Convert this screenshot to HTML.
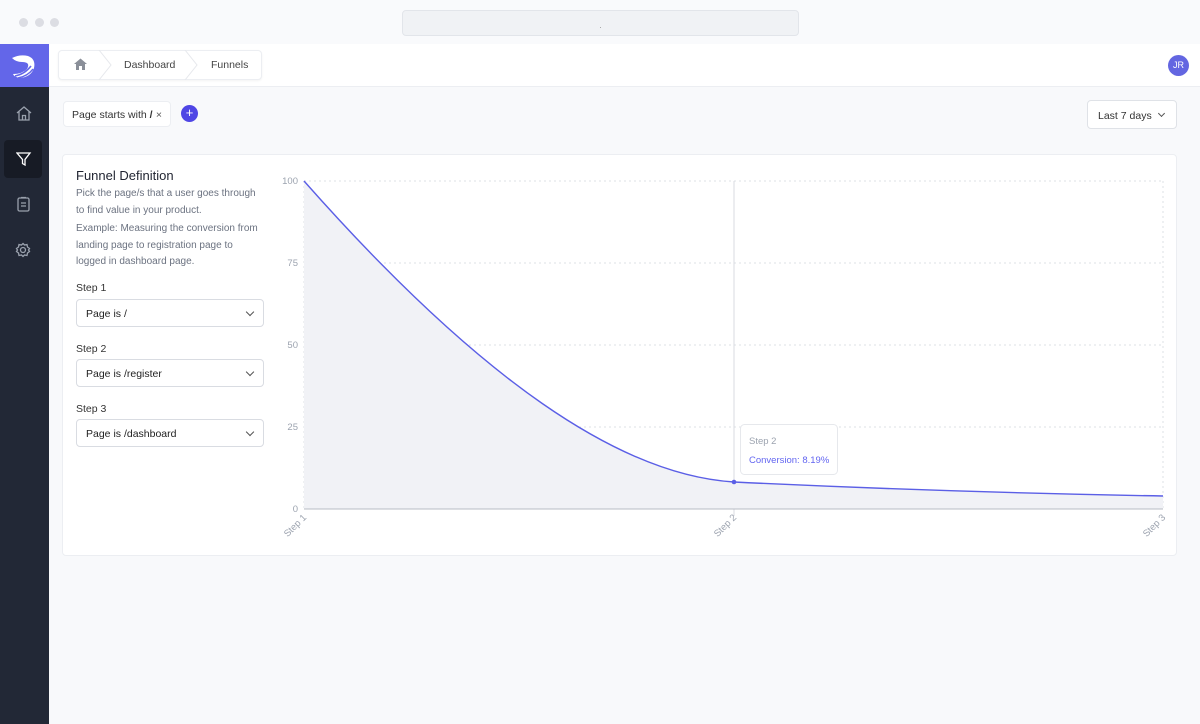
<!DOCTYPE html>
<html><head><style>
*{box-sizing:border-box;margin:0;padding:0}
body{width:1200px;height:724px;overflow:hidden;background:#f8f9fb;font-family:"Liberation Sans",sans-serif;position:relative;color:#1f2330}
.abs{position:absolute}
.dot{width:9px;height:9px;border-radius:50%;background:#dcdde3;top:18px}
.card{background:#fff;border:1px solid #eceef2;border-radius:4px}
.sel{position:absolute;left:76px;width:188px;height:28px;border:1px solid #d9dce2;border-radius:4px;background:#fff;font-size:10.5px;padding:8px 9px;color:#222}
.sel:after{content:"";position:absolute;right:10px;top:9px;width:5px;height:5px;border-right:1.3px solid #555;border-bottom:1.3px solid #555;transform:rotate(45deg)}
.lbl{position:absolute;left:76px;font-size:10.5px;color:#333}
.p{font-size:10px;color:#6b7280;line-height:16.5px;white-space:nowrap}
</style></head><body>
<div class="abs" style="left:0;top:0;width:1200px;height:44px;background:#f9fafc"></div>
<div class="abs dot" style="left:19px"></div><div class="abs dot" style="left:35px"></div><div class="abs dot" style="left:50px"></div>
<div class="abs" style="left:402px;top:10px;width:397px;height:26px;background:#f0f2f5;border:1px solid #e2e5ea;border-radius:4px;font-size:8px;color:#888;text-align:center;line-height:30px">.</div>
<div class="abs" style="left:0;top:44px;width:49px;height:680px;background:#222836"></div>
<div class="abs" style="left:0;top:44px;width:49px;height:43px;background:#6366e9">
<svg width="49" height="43"><path d="M12 14 Q20 10 28 12 Q36 15 34 24 Q31 33 20 34 Q14 33 13 30 Q22 30 27 25 Q31 18 22 18 Q16 18 12 14Z" fill="#fff"/><path d="M15 32 Q25 30 31 22 M18 34 Q28 32 33 25" stroke="#6366e9" stroke-width="1.5" fill="none"/></svg></div>
<svg class="abs" style="left:15px;top:105px" width="18" height="16" fill="none" stroke="#9aa1ad" stroke-width="1.3"><path d="M2 8 L9 2 L16 8 M4 6.5 V15 H14 V6.5 M7.5 15 V10.5 H10.5 V15"/></svg>
<div class="abs" style="left:4px;top:140px;width:38px;height:38px;background:#171b25;border-radius:4px"></div>
<svg class="abs" style="left:16px;top:152px" width="16" height="15" fill="none" stroke="#fff" stroke-width="1.3"><path d="M1 1 H14 L9 7.5 V13 L6.5 11.5 V7.5 Z"/></svg>
<svg class="abs" style="left:17px;top:196px" width="14" height="16" fill="none" stroke="#9aa1ad" stroke-width="1.3"><rect x="1" y="2" width="11" height="13" rx="1.5"/><path d="M4 1.5 H9 M4 7 H9 M4 10 H9"/></svg>
<svg class="abs" style="left:15px;top:242px" width="16" height="16" fill="none" stroke="#9aa1ad" stroke-width="1.3"><circle cx="8" cy="8" r="2.5"/><path d="M8 1.5 L9.5 3 L12 2.5 L12.5 5 L14.5 6.5 L13.5 8 L14.5 9.5 L12.5 11 L12 13.5 L9.5 13 L8 14.5 L6.5 13 L4 13.5 L3.5 11 L1.5 9.5 L2.5 8 L1.5 6.5 L3.5 5 L4 2.5 L6.5 3 Z"/></svg>
<div class="abs" style="left:49px;top:44px;width:1151px;height:43px;background:#fff;border-bottom:1px solid #eceef2"></div>
<div class="abs card" style="left:58px;top:50px;width:204px;height:30px;box-shadow:0 1px 2px rgba(0,0,0,.05)"></div>
<svg class="abs" style="left:74px;top:58px" width="13" height="12"><path d="M6.5 0.5 L13 6 H11 V12 H8 V8 H5 V12 H2 V6 H0 Z" fill="#8a8f99"/></svg>
<svg class="abs" style="left:97px;top:50px" width="180" height="30" fill="none" stroke="#e6e8ec"><path d="M2 0 L14 15 L2 30 M88 0 L100 15 L88 30"/></svg>
<div class="abs" style="left:124px;top:59px;font-size:10.5px;color:#444">Dashboard</div>
<div class="abs" style="left:211px;top:59px;font-size:10.5px;color:#444">Funnels</div>
<div class="abs" style="left:1168px;top:55px;width:21px;height:21px;border-radius:50%;background:#6366e1;color:#fff;font-size:9px;text-align:center;line-height:21px">JR</div>
<div class="abs card" style="left:63px;top:101px;width:108px;height:26px;font-size:10.5px;padding:7px 8px;color:#333">Page starts with <b>/</b><span style="position:absolute;right:8px;color:#555">×</span></div>
<div class="abs" style="left:181px;top:105px;width:17px;height:17px;border-radius:50%;background:#4f46e5;color:#fff;font-size:13px;text-align:center;line-height:16px">+</div>
<div class="abs card" style="left:1087px;top:100px;width:90px;height:29px;border-color:#dfe2e7;font-size:10.5px;padding:9px 10px;color:#333">Last 7 days<span style="position:absolute;right:12px;top:10px;width:5px;height:5px;border-right:1.3px solid #555;border-bottom:1.3px solid #555;transform:rotate(45deg)"></span></div>
<div class="abs card" style="left:62px;top:154px;width:1115px;height:402px"></div>
<div class="abs" style="left:76px;top:168px;font-size:13px;color:#1f2330">Funnel Definition</div>
<div class="abs p" style="left:76px;top:186px">Pick the page/s that a user goes through<br>to find value in your product.</div>
<div class="abs p" style="left:76px;top:221px">Example: Measuring the conversion from<br>landing page to registration page to<br>logged in dashboard page.</div>
<div class="lbl" style="top:282px">Step 1</div><div class="sel" style="top:299px">Page is /</div>
<div class="lbl" style="top:343px">Step 2</div><div class="sel" style="top:359px">Page is /register</div>
<div class="lbl" style="top:403px">Step 3</div><div class="sel" style="top:419px">Page is /dashboard</div>
<svg class="abs" style="left:270px;top:170px" width="910" height="380" font-family="Liberation Sans" font-size="9.5" fill="#9ca3af">
<g transform="translate(-270,-170)">
<g stroke="#dde0e5" stroke-dasharray="2 3" fill="none"><path d="M304 181 H1163 M304 263 H1163 M304 345 H1163 M304 427 H1163 M1163 181 V509 M304 181 V509"/></g>
<path d="M734 181 V516" stroke="#d8dbe0"/>
<path d="M304 181 C480 380 620 475 734 482 C900 490 1050 494 1163 496 V509 H304Z" fill="#f1f2f6"/>
<path d="M304 509 H1163" stroke="#b8bcc4"/>
<path d="M304 181 C480 380 620 475 734 482 C900 490 1050 494 1163 496" stroke="#5b5fe6" stroke-width="1.4" fill="none"/>
<circle cx="734" cy="482" r="2.3" fill="#5b5fe6"/>
<g text-anchor="end"><text x="298" y="184">100</text><text x="298" y="266">75</text><text x="298" y="348">50</text><text x="298" y="430">25</text><text x="298" y="512">0</text></g>
<g text-anchor="end"><text transform="translate(307,518) rotate(-45)">Step 1</text><text transform="translate(737,518) rotate(-45)">Step 2</text><text transform="translate(1166,518) rotate(-45)">Step 3</text></g>
<rect x="740.5" y="424.5" width="97" height="50" rx="4" fill="#fff" stroke="#e6e8ec"/>
<text x="749" y="444" fill="#9ca3af">Step 2</text>
<text x="749" y="463" fill="#6366f1">Conversion: 8.19%</text>
</g></svg>
</body></html>
